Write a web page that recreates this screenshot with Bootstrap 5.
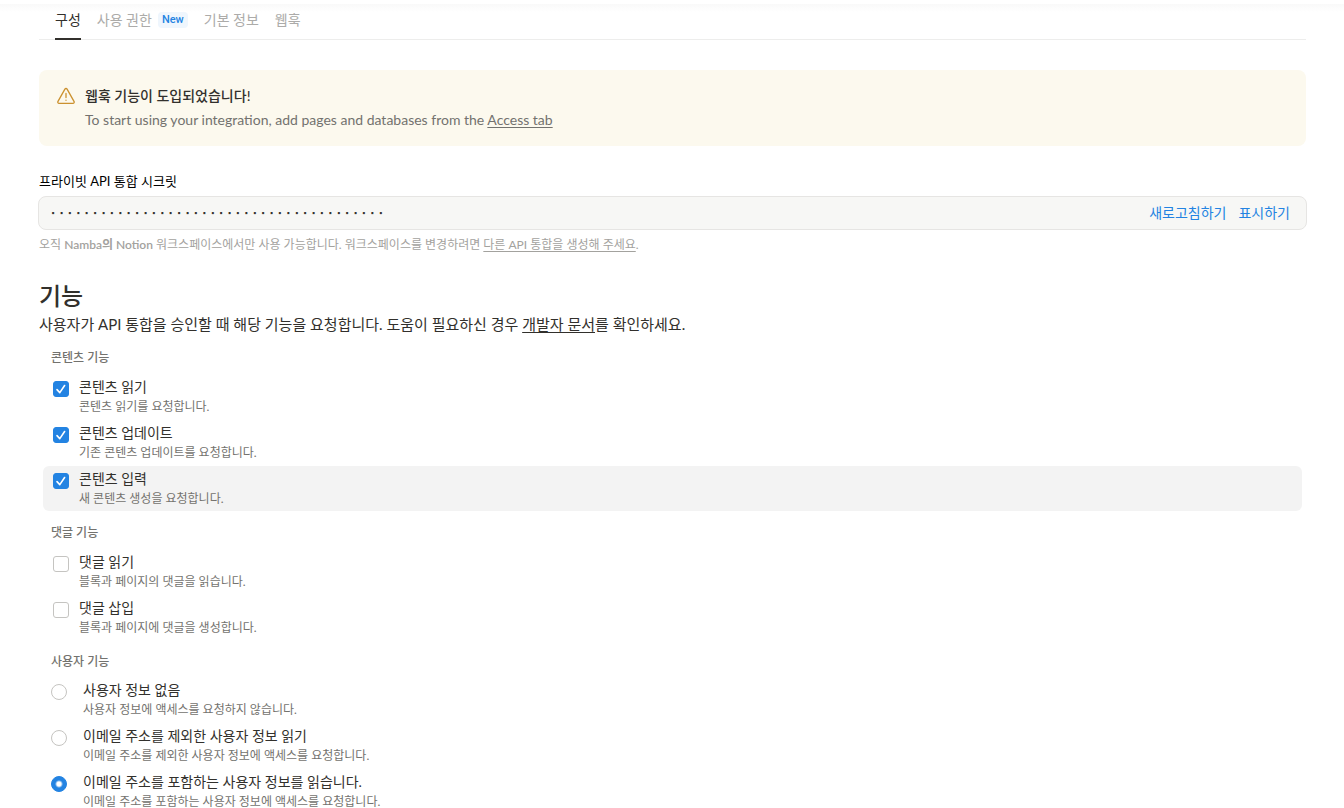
<!DOCTYPE html>
<html lang="ko">
<head>
<meta charset="utf-8">
<meta name="viewport" content="width=device-width, initial-scale=1">
<title>API 통합 구성</title>
<link href="https://cdn.jsdelivr.net/npm/bootstrap@5.3.0/dist/css/bootstrap.min.css" rel="stylesheet">
<style>
  :root { --ink: #32302c; --muted-ink: #73726e; --faint-ink: #a3a29e; --accent: #2383e2; }
  body { font-family: Lato, "Noto Sans CJK KR", sans-serif; font-size: 14px; line-height: 20px; color: var(--ink); background: #fff; }
  .scroll-edge { height: 8px; margin-top: 4px; background: linear-gradient(#f9f9f9, #fff); }
  .page-main { padding: 0 38px 0 39px; }
  .tab-bar { height: 28px; padding-left: 16px; gap: 16px; border-bottom: 1px solid #ededec; }
  .tab-bar .nav-link { padding: 0; height: 28px; line-height: 16px; color: #acaba9; border-bottom: 2px solid transparent; }
  .tab-bar .nav-link.active { color: var(--ink); border-color: var(--ink); }
  .new-tag { font: 500 11px/16px Roboto, sans-serif; color: var(--accent); background: #eff6fd; border-radius: 4px; padding: 0 4px; margin-left: 6px; vertical-align: top; }
  .notice { margin-top: 30px; padding: 16px 18px; gap: 10px; background: #fcf9ee; border-radius: 8px; min-height: 76px; }
  .notice svg { margin-top: 1px; flex: none; }
  .notice-title { font-weight: 500; font-size: 14px; line-height: 20px; margin: 0 0 4px; }
  .notice-text { color: var(--muted-ink); margin: 0; }
  a.plain { color: inherit; text-decoration: underline; text-underline-offset: 2px; }
  .secret-label { margin: 25px 0 5px; font-size: 13px; color: #000; display: block; }
  .secret-box { height: 34px; padding: 0 16px 0 10px; gap: 12px; background: #f7f7f5; border: 1px solid #e6e5e3; border-radius: 8px; margin: 0 -1px; }
  .secret-box input { border: 0; background: none; outline: 0; padding: 0; min-width: 0; font: bold 14px/20px "Liberation Mono", monospace; color: var(--ink); }
  .secret-box button { border: 0; padding: 0; background: none; color: var(--accent); font-size: 14px; }
  .secret-note { margin: 6px 0 0; font-size: 12px; line-height: 18px; color: var(--faint-ink); }
  .secret-note strong { font-weight: 600; }
  .section-title { margin: 25px 0 0; font-size: 24px; line-height: 34px; font-weight: 500; }
  .section-text { margin: 0; font-size: 15px; line-height: 22px; }
  .group-set { padding: 2px 4px 0; }
  .group-set legend { margin: 0 0 7px; padding: 0 8px; font-size: 12px; line-height: 18px; color: var(--muted-ink); font-weight: 500; }
  .group-set fieldset { padding-top: 12px; }
  .option-row { display: flex; gap: 10px; padding: 3px 10px; height: 45px; margin-bottom: 1px; border-radius: 6px; }
  .option-row.hovered { background: #f3f3f3; }
  .option-row .form-check-input { flex: none; width: 16px; height: 16px; margin: 4px 0 0; border-color: #c5c4c1; box-shadow: none; }
  .option-row .form-check-input[type=checkbox] { border-radius: 3px; }
  .option-row .form-check-input:checked { background-color: var(--accent); border-color: var(--accent); }
  .option-row .form-check-input[type=checkbox]:checked { background-image: url("data:image/svg+xml,%3Csvg xmlns='http://www.w3.org/2000/svg' viewBox='0 0 14 14'%3E%3Cpath d='M3 7.600L5.800 10.600L10.600 3.500' fill='none' stroke='white' stroke-width='1.600' stroke-linecap='round' stroke-linejoin='round'/%3E%3C/svg%3E"); }
  .option-row .form-check-input[type=radio]:checked { background-image: radial-gradient(circle, #fff 2px, transparent 4px); }
  .option-row.radio-row { padding: 2px 10px 2px 8px; gap: 16px; }
  .option-row label { flex: 1; line-height: 20px; }
  .option-row small { display: block; margin-top: 1px; font-size: 12px; line-height: 18px; color: var(--muted-ink); }
</style>
</head>
<body>
<div class="scroll-edge"></div>
<main class="page-main">
  <nav class="nav tab-bar flex-nowrap">
    <a class="nav-link active" href="#config">구성</a>
    <a class="nav-link" href="#access">사용 권한<span class="new-tag d-inline-block">New</span></a>
    <a class="nav-link" href="#info">기본 정보</a>
    <a class="nav-link" href="#webhook">웹훅</a>
  </nav>

  <section class="notice d-flex">
    <svg width="18" height="18" viewBox="0 0 18 18" fill="none" stroke="#cb912f" stroke-width="1.3" stroke-linejoin="round" stroke-linecap="round" aria-hidden="true">
      <path d="M7.9 2.1 1 14.4C.5 15.3 1 16.300 2 16.300H16C17 16.300 17.500 15.300 17 14.400L10.100 2.100C9.600 1.300 8.400 1.300 7.900 2.100Z"/>
      <path d="M9 6.500V10.500M9 13.200V13.300"/>
    </svg>
    <div>
      <h2 class="notice-title">웹훅 기능이 도입되었습니다!</h2>
      <p class="notice-text">To start using your integration, add pages and databases from the <a class="plain" href="#access">Access tab</a></p>
    </div>
  </section>

  <label class="secret-label" for="secret">프라이빗 API 통합 시크릿</label>
  <div class="secret-box d-flex align-items-center">
    <input id="secret" class="flex-grow-1" type="text" readonly value="∙∙∙∙∙∙∙∙∙∙∙∙∙∙∙∙∙∙∙∙∙∙∙∙∙∙∙∙∙∙∙∙∙∙∙∙∙∙∙∙">
    <button type="button">새로고침하기</button>
    <button type="button">표시하기</button>
  </div>
  <p class="secret-note">오직 <strong>Namba의 Notion</strong> 워크스페이스에서만 사용 가능합니다. 워크스페이스를 변경하려면 <a class="plain" href="#new">다른 API 통합을 생성해 주세요</a>.</p>

  <h1 class="section-title">기능</h1>
  <p class="section-text">사용자가 API 통합을 승인할 때 해당 기능을 요청합니다. 도움이 필요하신 경우 <a class="plain" href="#docs">개발자 문서</a>를 확인하세요.</p>

  <form class="group-set">
    <fieldset>
      <legend>콘텐츠 기능</legend>
      <div class="option-row"><input class="form-check-input" type="checkbox" id="c1" checked><label for="c1">콘텐츠 읽기<small>콘텐츠 읽기를 요청합니다.</small></label></div>
      <div class="option-row"><input class="form-check-input" type="checkbox" id="c2" checked><label for="c2">콘텐츠 업데이트<small>기존 콘텐츠 업데이트를 요청합니다.</small></label></div>
      <div class="option-row hovered"><input class="form-check-input" type="checkbox" id="c3" checked><label for="c3">콘텐츠 입력<small>새 콘텐츠 생성을 요청합니다.</small></label></div>
    </fieldset>
    <fieldset>
      <legend>댓글 기능</legend>
      <div class="option-row"><input class="form-check-input" type="checkbox" id="m1"><label for="m1">댓글 읽기<small>블록과 페이지의 댓글을 읽습니다.</small></label></div>
      <div class="option-row"><input class="form-check-input" type="checkbox" id="m2"><label for="m2">댓글 삽입<small>블록과 페이지에 댓글을 생성합니다.</small></label></div>
    </fieldset>
    <fieldset>
      <legend>사용자 기능</legend>
      <div class="option-row radio-row"><input class="form-check-input" type="radio" name="user" id="u1"><label for="u1">사용자 정보 없음<small>사용자 정보에 액세스를 요청하지 않습니다.</small></label></div>
      <div class="option-row radio-row"><input class="form-check-input" type="radio" name="user" id="u2"><label for="u2">이메일 주소를 제외한 사용자 정보 읽기<small>이메일 주소를 제외한 사용자 정보에 액세스를 요청합니다.</small></label></div>
      <div class="option-row radio-row"><input class="form-check-input" type="radio" name="user" id="u3" checked><label for="u3">이메일 주소를 포함하는 사용자 정보를 읽습니다.<small>이메일 주소를 포함하는 사용자 정보에 액세스를 요청합니다.</small></label></div>
    </fieldset>
  </form>
</main>
<script src="https://cdn.jsdelivr.net/npm/bootstrap@5.3.0/dist/js/bootstrap.bundle.min.js"></script>
</body>
</html>
